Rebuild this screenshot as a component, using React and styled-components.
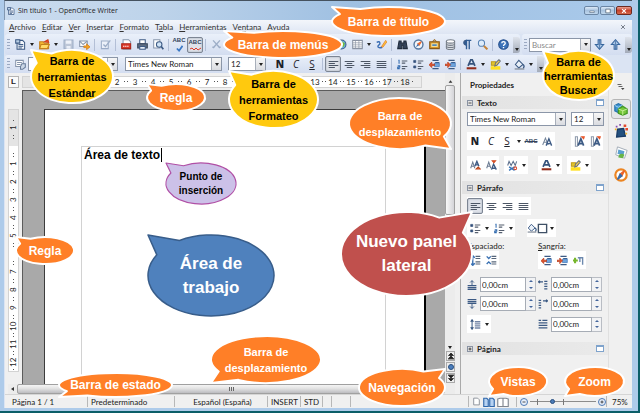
import React from "react";
import styled, { createGlobalStyle, css } from "styled-components";

const GlobalStyle = createGlobalStyle`
  * {
    box-sizing: border-box;
  }

  body {
    margin: 0;
    font-family: Lato, "Open Sans", sans-serif;
    font-size: 8px;
    color: #222;
  }

  button, input, select {
    margin: 0;
    padding: 0;
    border: 0;
    background: none;
    color: inherit;
    font: inherit;
  }
`;

/* ---------- window ---------- */

const Window = styled.div`
  position: relative;
  display: flex;
  flex-direction: column;
  min-height: 100vh;
  overflow: hidden;
  background: #dbe4f3;
  border: solid #0b5e68;
  border-width: 0 2px 2px 0;
`;

const Frame = styled.div`
  flex: 1;
  display: flex;
  flex-direction: column;
  border: solid #aecbea;
  border-width: 0 6px 3px 4px;
`;

const TitleBar = styled.header`
  display: flex;
  align-items: center;
  gap: 3px;
  height: 20px;
  padding: 0 0 0 2px;
  border-top: 1px solid #45525f;
  border-left: 1px solid #8297af;
  background: linear-gradient(90deg, #cbdcef 0, #bdd3ea 25%, #9fc0e2 55%, #a9c9ea 100%);
`;

const Title = styled.h1`
  flex: 1;
  margin: 0;
  font-family: "Open Sans", sans-serif;
  font-size: 7px;
  font-weight: 400;
`;

const WindowButton = styled.button`
  display: grid;
  place-items: center;
  width: ${({ $close }) => ($close ? 16 : 15)}px;
  height: 9px;
  border: 1px solid ${({ $close }) => ($close ? "#6d2a20" : "#6b86a5")};
  border-radius: 2px;
  background: ${({ $close }) =>
    $close
      ? "linear-gradient(#e9a294, #c6422c 50%, #d56a4c)"
      : "linear-gradient(#dbe8f6, #a9c3df 50%, #c1d8ee)"};
`;

const WindowButtons = styled.div`
  display: flex;
  gap: 1px;
`;

const MenuBar = styled.nav`
  display: flex;
  align-items: center;
  height: 14px;
  margin-left: 1px;
  padding: 0 4px 0 4px;
  gap: 6px;
  background: linear-gradient(#f3f6fb, #dde5f3);
`;

const MenuItem = styled.a`
  color: #333;
  text-decoration: none;

  &:last-of-type {
    flex: 1;
  }
`;

const CloseDocument = styled.button`
  display: grid;
  place-items: center;
  width: 10px;
  height: 10px;
`;

/* ---------- toolbars ---------- */

const ToolbarRow = styled.div`
  display: flex;
  height: ${({ $tall }) => ($tall ? 21 : 18)}px;
  margin-left: 1px;
`;

const Toolbar = styled.div`
  display: flex;
  align-items: center;
  flex: none;
  margin-right: 2px;
  padding-left: 2px;
  border-radius: 3px;
  background: linear-gradient(#eaf0fa, #d3ddf0);
`;

const Grip = styled.span`
  width: 3px;
  height: 12px;
  margin-right: 2px;
  background: repeating-linear-gradient(#9ba9c2 0 1px, transparent 1px 3px);
`;

const Separator = styled.span`
  width: 1px;
  height: 12px;
  margin: 0 2px;
  background: #b3bfd6;
`;

const Overflow = styled.button`
  display: flex;
  align-items: flex-end;
  justify-content: center;
  align-self: center;
  width: 7px;
  height: 16px;
  margin-left: 2px;
  padding-bottom: 2px;
  border-radius: 0 3px 3px 0;
  background: linear-gradient(#dfe4ec, #a3abb9);
`;

const Tool = styled.button`
  display: grid;
  place-items: center;
  flex: none;
  width: 16px;
  height: 16px;
  opacity: ${({ $faded }) => ($faded ? 0.4 : 1)};
  ${({ $active }) =>
    $active &&
    css`
      border: 1px solid #7d8694;
      border-radius: 2px;
      background: #dfe3ea;
      box-shadow: inset 0 0 2px #9aa3b1;
    `}
`;

const CaretButton = styled.button`
  display: grid;
  place-items: center;
  flex: none;
  width: 8px;
  height: 14px;
`;

const Arrow = styled.span`
  border: solid transparent;
  border-width: 3px 2px 0;
  border-top-color: #222;
`;

const ComboFrame = styled.label`
  display: flex;
  flex: ${({ $grow }) => ($grow ? "1" : "none")};
  width: ${({ $width }) => ($width ? `${$width}px` : "auto")};
  min-width: 0;
  height: 14px;
  margin-right: ${({ $gap }) => $gap || 0}px;
  border: 1px solid #8b96a8;
  background: #fff;
`;

const ComboSelect = styled.select`
  flex: 1;
  min-width: 0;
  padding-left: 2px;
  appearance: none;
  color: ${({ $muted }) => ($muted ? "#888" : "#222")};
`;

const ComboButton = styled.span`
  display: grid;
  place-items: center;
  flex: none;
  width: 10px;
  border-left: 1px solid #a8afba;
  background: linear-gradient(#f7f7f7, #d9dbe0);
`;

const Letter = styled.span`
  font: ${({ $weight }) => $weight || 700} 10px/12px "Open Sans", sans-serif;
  font-style: ${({ $italic }) => ($italic ? "italic" : "normal")};
  text-decoration: ${({ $underline }) => ($underline ? "underline" : "none")};
  color: #1d222b;
`;

const SmallLetters = styled.span`
  font: 700 6px/6px "Liberation Sans", sans-serif;
  color: #33425c;
  text-decoration: ${({ $strike }) => ($strike ? "line-through" : "none")};
`;

/* ---------- document ---------- */

const Body = styled.main`
  flex: 1;
  display: flex;
  margin-left: 1px;
  background: #f0f0f0;
`;

const Workspace = styled.section`
  flex: 1;
  display: flex;
  flex-direction: column;
  min-width: 0;
  padding-left: 3px;
`;

const WorkspaceRow = styled.div`
  flex: 1;
  display: flex;
`;

const Column = styled.div`
  flex: 1;
  display: flex;
  flex-direction: column;
  min-width: 0;
`;

const RulerRow = styled.div`
  display: flex;
  align-items: center;
  gap: 3px;
  height: 17px;
`;

const TabStop = styled.button`
  width: 11px;
  height: 12px;
  border: 1px solid #b5b5b5;
  background: #fafafa;
  font: 700 8px/9px "Liberation Sans", sans-serif;
`;

const Ruler = styled.div`
  display: flex;
  justify-content: flex-start;
  width: 400px;
  max-width: 100%;
  height: 12px;
  padding-left: 67px;
  overflow: hidden;
  border: 1px solid #d3d3d3;
  background: linear-gradient(90deg, #e4e4e4 59px, #fff 59px 364px, #ececec 364px);
`;

const RulerMark = styled.span`
  display: flex;
  align-items: center;
  justify-content: space-between;
  flex: none;
  width: 18px;
  padding: 0 1px;
  line-height: 10px;

  &::before,
  &::after {
    content: "";
    width: 1px;
    height: 1px;
    background: #555;
  }
`;

const VerticalRuler = styled.div`
  display: flex;
  flex-direction: column;
  width: 11px;
  margin-top: 19px;
  padding-top: 9px;
  align-self: flex-start;
  border: 1px solid #d3d3d3;
  background: linear-gradient(#e4e4e4 36px, #fff 36px);
`;

const VerticalMark = styled.span`
  display: flex;
  align-items: center;
  justify-content: space-between;
  flex: none;
  height: 18px;
  width: 9px;
  padding: 1px 0;
  writing-mode: vertical-rl;
  transform: rotate(180deg);
  line-height: 9px;

  &::before,
  &::after {
    content: "";
    width: 1px;
    height: 1px;
    background: #555;
  }
`;

const Canvas = styled.div`
  flex: 1;
  display: flex;
  margin-left: 3px;
  padding: 18px 19px 0 21px;
  border: solid #5c5c5c;
  border-width: 1px 0 0 1px;
  background: #a9a9a9;
`;

const Page = styled.article`
  flex: 1;
  padding: 36px 38px 0 36px;
  border: solid #3c3c3c;
  border-width: 1px 2px 0 1px;
  border-right-color: #000;
  background: #fff;
`;

const TextArea = styled.div`
  height: 100%;
  padding: 1px 1px 1px 2px;
  border: solid #d2d2d2;
  border-width: 1px 1px 0;
  font: 700 12px/14px "Liberation Sans", Arial, sans-serif;
  color: #000;
`;

const Cursor = styled.span`
  display: inline-block;
  width: 1px;
  height: 14px;
  margin-left: 1px;
  vertical-align: top;
  background: #000;
`;

const VScroll = styled.div`
  display: flex;
  flex-direction: column;
  align-items: center;
  gap: 1px;
  width: 10px;
  padding: 5px 0 1px;
  background: #ececec;
`;

const VTrack = styled.div`
  flex: 1;
  display: flex;
  flex-direction: column;
  width: 10px;
`;

const VThumb = styled.div`
  flex: ${({ $share }) => $share};
  border: 1px solid #a0a0a0;
  border-radius: 2px;
  background: linear-gradient(90deg, #f8f8f8, #d4d4d8);
`;

const VRest = styled.div`
  flex: ${({ $share }) => $share};
`;

const ScrollButton = styled.button`
  display: grid;
  place-items: center;
  width: 9px;
  height: ${({ $tall }) => ($tall ? 10 : 6)}px;
  border: ${({ $tall }) => ($tall ? "1px solid #aaa" : "0")};
`;

const HScroll = styled.div`
  display: flex;
  align-items: stretch;
  height: 10px;
  padding-right: 10px;
  background: #ececec;
`;

const LeftButton = styled.button`
  display: grid;
  place-items: center;
  width: 9px;
  height: 10px;

  &::before {
    content: "";
    border: solid transparent;
    border-width: 2px 3px 2px 0;
    border-right-color: #333;
  }
`;

const HThumb = styled.div`
  display: flex;
  align-items: center;
  justify-content: center;
  flex: 1;
  border: 1px solid #a0a0a0;
  border-radius: 2px;
  background: linear-gradient(#f5f5f5, #e2e2e2 45%, #bcbcc0);
`;

const HGrip = styled.span`
  width: 5px;
  height: 4px;
  background: repeating-linear-gradient(90deg, #666 0 1px, transparent 1px 2px);
`;

/* ---------- sidebar ---------- */

const Sidebar = styled.aside`
  display: flex;
  flex: none;
  width: 177px;
`;

const Panel = styled.div`
  flex: 1;
  min-width: 0;
  margin-left: 5px;
  border-left: 1px solid #aaa;
  border-right: 1px solid #e0e0e0;
`;

const PanelTitle = styled.h2`
  margin: 0;
  padding: 6px 0 5px 9px;
  font-size: 8px;
  line-height: 12px;
  font-weight: 700;
`;

const SectionHeader = styled.h3`
  display: flex;
  align-items: center;
  gap: 4px;
  height: 13px;
  margin: 0 0 0 1px;
  padding: 0 4px 0 5px;
  background: linear-gradient(90deg, #e2e2e2, #eaeaea);
  font-size: 8px;
  font-weight: 700;
`;

const SectionName = styled.span`
  flex: 1;
`;

const Toggle = styled.button`
  display: grid;
  place-items: center;
  width: 6px;
  height: 6px;
  border: 1px solid #8a93a3;
`;

const MoreButton = styled.button`
  width: 8px;
  height: 7px;
  border: 1px solid #7fa3cc;
  border-top-width: 2px;
  background: #fff;
`;

const SectionBody = styled.div`
  display: flex;
  flex-direction: column;
  gap: ${({ $gap }) => $gap}px;
  padding: ${({ $bottom }) => `3px 4px ${$bottom}px 6px`};
`;

const PanelRow = styled.div`
  display: flex;
  align-items: center;
  gap: 5px;
`;

const Halves = styled.div`
  display: grid;
  grid-template-columns: ${({ $left }) => $left || 71}px minmax(0, 1fr);
  align-items: center;
`;

const Group = styled.div`
  display: flex;
  align-items: center;
  justify-self: start;
  height: 18px;
  background: #fff;
`;

const FieldName = styled.span`
  line-height: 10px;
`;

const Spin = styled.label`
  display: flex;
  align-items: center;
  min-width: 0;
  height: 15px;
  padding-right: 2px;
`;

const SpinInput = styled.input`
  flex: 1;
  width: 0;
  min-width: 0;
  height: 15px;
  margin-left: 3px;
  padding-left: 1px;
  border: 1px solid #a6acb5;
  background: #fff;
`;

const SpinSteps = styled.span`
  display: grid;
  flex: none;
  width: 10px;
  height: 15px;
  border: solid #b9bdc4;
  border-width: 1px 1px 1px 0;
  background: #f2f3f5;
`;

const Step = styled.button`
  display: grid;
  place-items: center;

  &::before {
    content: "";
    border: solid transparent;
    border-width: ${({ $up }) => ($up ? "0 2px 2px" : "2px 2px 0")};
    border-color: ${({ $up }) =>
      $up ? "transparent transparent #42659c" : "#42659c transparent transparent"};
  }
`;

const TabStrip = styled.div`
  display: flex;
  flex-direction: column;
  align-items: center;
  gap: 2px;
  width: 23px;
  padding-top: 4px;
`;

const SideTab = styled.button`
  display: grid;
  place-items: center;
  width: 20px;
  height: 20px;
  border: 1px solid ${({ $active }) => ($active ? "#b5b5b5" : "transparent")};
  border-radius: 3px;
  background: ${({ $active }) => ($active ? "#e4e6e8" : "none")};
`;

/* ---------- status bar ---------- */

const StatusBar = styled.footer`
  display: flex;
  align-items: center;
  height: 14px;
  margin-left: 1px;
  border-top: 1px solid #d5d5d5;
  background: #f0f0f0;
`;

const StatusCell = styled.span`
  flex: none;
  display: flex;
  align-items: center;
  justify-content: ${({ $center }) => ($center ? "center" : "flex-start")};
  gap: 2px;
  width: ${({ $width }) => $width}px;
  height: 11px;
  padding-left: ${({ $pad }) => $pad || 3}px;
  border-right: ${({ $last }) => ($last ? "0" : "1px solid #b8b8b8")};
`;

const StatusSpace = styled.span`
  flex: 1;
  height: 11px;
  border-right: 1px solid #b8b8b8;
`;

const RoundButton = styled.button`
  display: grid;
  place-items: center;
  flex: none;
  width: 8px;
  height: 8px;
  border: 1px solid #4e79b4;
  border-radius: 50%;
  background: #e6eefa;
`;

const ZoomRange = styled.input`
  appearance: none;
  flex: 1;
  min-width: 0;
  height: 9px;
  background:
    linear-gradient(#777, #777) 7px 50% / 1px 6px no-repeat,
    linear-gradient(#777, #777) 50% 50% / 1px 6px no-repeat,
    linear-gradient(#8c8c8c, #8c8c8c) 0 50% / 100% 1px no-repeat;

  &::-webkit-slider-thumb {
    appearance: none;
    width: 5px;
    height: 5px;
    border: 1px solid #294f80;
    border-radius: 50%;
    background: #4a7cb8;
  }
`;

/* ---------- callouts ---------- */

const CalloutBox = styled.div`
  position: absolute;
  ${({ $x }) => ($x < 0 ? `right: ${-$x}px` : `left: ${$x}px`)};
  ${({ $y }) => ($y < 0 ? `bottom: ${-$y}px` : `top: ${$y}px`)};
  width: ${({ $w }) => $w}px;
  height: ${({ $h }) => $h}px;
  display: flex;
  align-items: center;
  justify-content: center;
  text-align: center;
  white-space: pre;
  font: 700 ${({ $size }) => $size}px / ${({ $line }) => $line}px "Liberation Sans", Arial, sans-serif;
  color: ${({ $color }) => $color};
`;

const BubbleShape = styled.svg`
  position: absolute;
  inset: 0;
  width: 100%;
  height: 100%;
  overflow: visible;
`;

const CalloutText = styled.span`
  position: relative;
`;

const tones = {
  orange: { fill: "#ff7f27", stroke: "#fff", width: 2, color: "#fff" },
  yellow: { fill: "#ffc90e", stroke: "#fff", width: 2, color: "#000" },
  red: { fill: "#c0504d", stroke: "#fff", width: 2, color: "#fff" },
  blue: { fill: "#4f81bd", stroke: "#385d8a", width: 1.5, color: "#fff" },
  violet: { fill: "#ccc1e8", stroke: "#b04fa5", width: 1.2, color: "#000" },
};

// ellipse that fills the box, with a tail that ends in one of its corners
function bubblePath(w, h, corner) {
  const sx = corner.includes("r") ? 1 : -1;
  const sy = corner.includes("b") ? 1 : -1;
  const at = (nx, ny) => [(w / 2) * (1 + sx * nx), (h / 2) * (1 + sy * ny)];
  const side = at(0.86, 0.51);
  const flat = at(0.5, 0.866);
  const tip = at(1, 1);
  const sweep = sx * sy > 0 ? 0 : 1;
  return `M${tip} L${side} A${w / 2} ${h / 2} 0 1 ${sweep} ${flat} Z`;
}

function Callout({ x, y, w, h, corner = "tl", tone = "orange", size = 12, line = 16, children }) {
  const t = tones[tone];
  return (
    <CalloutBox $x={x} $y={y} $w={w} $h={h} $size={size} $line={line} $color={t.color}>
      <BubbleShape aria-hidden="true">
        <path d={bubblePath(w, h, corner)} fill={t.fill} stroke={t.stroke} strokeWidth={t.width} strokeLinejoin="round" />
      </BubbleShape>
      <CalloutText>{children}</CalloutText>
    </CalloutBox>
  );
}

const callouts = [
  { x: 31, y: 50, w: 82, h: 53, tone: "yellow", size: 11, text: "Barra de\nherramientas\nEstándar" },
  { x: 332, y: 7, w: 113, h: 29, text: "Barra de título" },
  { x: 224, y: 31, w: 118, h: 27, text: "Barra de menús" },
  { x: 147, y: 84, w: 58, h: 27, text: "Regla" },
  { x: 229, y: 71, w: 89, h: 57, tone: "yellow", size: 11, text: "Barra de\nherramientas\nFormateo" },
  { x: -24, y: 51, w: 71, h: 49, tone: "yellow", size: 11, line: 14, text: "Barra de\nherramientas\nBuscar" },
  { x: -187, y: 98, w: 102, h: 51, corner: "br", size: 11, text: "Barra de\ndesplazamiento" },
  { x: 166, y: 163, w: 70, h: 41, tone: "violet", size: 10, line: 14, text: "Punto de\ninserción" },
  { x: 148, y: 235, w: 126, h: 81, tone: "blue", size: 17, line: 24, text: "Área de\ntrabajo" },
  { x: -166, y: 212, w: 131, h: 84, corner: "tr", tone: "red", size: 17, line: 24, text: "Nuevo panel\nlateral" },
  { x: 16, y: 237, w: 58, h: 27, text: "Regla" },
  { x: 59, y: -14, w: 113, h: 24, corner: "bl", text: "Barra de estado" },
  { x: 211, y: -28, w: 110, h: 47, corner: "bl", size: 11, text: "Barra de\ndesplazamiento" },
  { x: -193, y: -5, w: 86, h: 37, corner: "tr", text: "Navegación" },
  { x: -91, y: -15, w: 58, h: 29, corner: "bl", text: "Vistas" },
  { x: -14, y: -15, w: 59, h: 29, corner: "bl", text: "Zoom" },
];

/* ---------- icons ---------- */

const Svg = styled.svg`
  display: block;
  flex: none;
  width: ${({ $size }) => $size || 11}px;
  height: ${({ $size }) => $size || 11}px;
  fill: none;
  stroke: #3c5a84;
  stroke-width: 1.5;
`;

const shapes = {
  doc: (
    <>
      <path d="M3 2h8l3 3v10H3z" fill="#f5f8fc" />
      <path d="M1 1h6v5H1z" fill="#b9cfe5" />
      <path d="M5 8h7M5 10.500h7M5 13h5" />
    </>
  ),
  folder: (
    <>
      <path d="M1 4h5l2 2h6v8H1z" fill="#f2b632" stroke="#c5811c" />
      <path d="M3 8h12l-3 6H1z" fill="#ffdb67" stroke="#c5811c" />
      <path d="M8 4l5-3 1 4z" fill="#e4572e" stroke="#d2411d" />
    </>
  ),
  save: (
    <>
      <path d="M1.500 1.500h13v13h-13z" fill="#8d99ad" />
      <path d="M4 2h8v5H4zM5 10h6v4H5z" fill="#fff" stroke="none" />
    </>
  ),
  mail: (
    <>
      <path d="M1 3h11v8H1z" fill="#fff" stroke="#8796ac" />
      <path d="M1 3l5 5 6-5" stroke="#8796ac" />
      <path d="M7 10h4V7l5 4.500-5 4v-3H7z" fill="#f6a420" stroke="#cf7412" strokeWidth="1" />
    </>
  ),
  edit: (
    <>
      <path d="M2 3h10v11H2z" fill="#fff" />
      <path d="M5 8l3 3 7-9" strokeWidth="2" />
    </>
  ),
  check: <path d="M2 8l5 5 8-11" stroke="#3b78c4" strokeWidth="4" />,
  pdf: (
    <>
      <path d="M3 1h8l3 3v11H3z" fill="#fff" stroke="#8796ac" />
      <path d="M1 7h13v7H1z" fill="#db3a2a" stroke="#ae2418" />
      <path d="M3 10.500h9" stroke="#fff" strokeDasharray="2 1" />
    </>
  ),
  print: (
    <>
      <path d="M4 1h8v6H4z" fill="#fff" />
      <path d="M1 7h14v6H1z" fill="#5d6d83" stroke="#38465a" />
      <path d="M4 11h8v4H4z" fill="#e6edf7" />
    </>
  ),
  preview: (
    <>
      <path d="M1 1h9v12H1z" fill="#fff" stroke="#8796ac" />
      <circle cx="9" cy="8" r="4" fill="#cfe3f6" />
      <path d="M12 11l3 4" strokeWidth="2.500" />
    </>
  ),
  cut: <path d="M3 2l10 11M13 2L3 13M2 12h3M11 12h3" strokeWidth="2" />,
  copy: <path d="M2 2h8v9H2zM6 5h8v9H6z" fill="#fff" />,
  paste: <path d="M2 3h11v12H2zM5 1h5v3H5z" fill="#e0c48a" />,
  brush: <path d="M9 1l4 4-6 5-3-3zM5 9l-3 6 6-3" fill="#f3bb4b" />,
  undo: <path d="M2 7h8a3 3 0 0 1 0 6H6M5 3L2 7l3 4" />,
  redo: <path d="M14 7H6a3 3 0 0 0 0 6h4M11 3l3 4-3 4" />,
  globe: (
    <>
      <circle cx="8" cy="8" r="6.500" fill="#69aede" />
      <path d="M8 3l5 3-2 6-4-3z" fill="#70bb43" stroke="none" />
    </>
  ),
  table: (
    <>
      <path d="M1 2h14v12H1z" fill="#fff" stroke="#8a93a3" />
      <path d="M1 5.500h14M1 8.500h14M1 11.500h14M5 2v12M10 2v12" stroke="#8a93a3" strokeWidth="1" />
    </>
  ),
  draw: (
    <>
      <path d="M1 5c5-3 6 2 3 4s0 5 5 3" stroke="#3a6eb5" strokeWidth="2" />
      <path d="M8 11l6-9 2 2-6 8z" fill="#ffc735" stroke="#df7023" strokeWidth="1" />
    </>
  ),
  find: <path d="M3 3h3v3h4V3h3l2 11H9V9H7v5H1z" fill="#34435a" stroke="#202b3b" />,
  compass: (
    <>
      <circle cx="8" cy="8" r="6.500" fill="#f1f6fc" stroke="#54779f" strokeWidth="2" />
      <path d="M12 4l-3 5-2-2z" fill="#ef6a2e" stroke="#ef6a2e" />
      <path d="M4 12l3-5 2 2z" fill="#3c6fae" stroke="none" />
    </>
  ),
  gallery: (
    <>
      <path d="M5 4l3-3 3 3" stroke="#9a6b22" />
      <path d="M1 4h14v10H1z" fill="#d59726" stroke="#87591a" />
      <path d="M4 7h8v4H4z" fill="#518ab9" stroke="#f7de95" />
    </>
  ),
  database: (
    <>
      <path d="M2 3v10c0 3 12 3 12 0V3" fill="#d7dbe0" stroke="#777f89" />
      <ellipse cx="8" cy="3.500" rx="6" ry="2.500" fill="#fff" stroke="#777f89" />
      <path d="M2 7c0 3 12 3 12 0M2 10c0 3 12 3 12 0" stroke="#777f89" />
    </>
  ),
  pilcrow: (
    <>
      <path d="M8 2a4 3.500 0 0 0 0 7z" fill="#315d93" />
      <path d="M8 2v13M12 2v13M7 2h8" strokeWidth="2" stroke="#315d93" />
    </>
  ),
  zoom: (
    <>
      <circle cx="6.500" cy="6" r="4.500" fill="#deecfa" stroke="#5681b3" />
      <path d="M10 10l5 5" stroke="#c48439" strokeWidth="3" />
    </>
  ),
  help: (
    <>
      <circle cx="8" cy="8" r="7" fill="#3c73b9" stroke="#264f8b" />
      <path d="M5.500 6c0-3 5-3 5 0 0 2-2.500 2-2.500 4M8 11.500v2" stroke="#fff" strokeWidth="2" />
    </>
  ),
  styles: (
    <>
      <path d="M1 2h11v9H1z" fill="#fff" stroke="#8796ac" />
      <path d="M3 5h7M3 8h5" stroke="#8796ac" />
      <path d="M10 7h5v5l-4 3H8v-4z" fill="#cbd7e6" stroke="#667b98" />
    </>
  ),
  down: (
    <>
      <path d="M6 1h4v7h4l-6 7-6-7h4z" fill="#a9c6e6" stroke="#37669d" />
      <path d="M8 1v12" stroke="#37669d" strokeWidth="1" />
    </>
  ),
  up: (
    <>
      <path d="M6 15h4V8h4L8 1 2 8h4z" fill="#a9c6e6" stroke="#37669d" />
      <path d="M8 3v12" stroke="#37669d" strokeWidth="1" />
    </>
  ),
  scrollUp: <path d="M2 12l6-8 6 8z" fill="#333" stroke="none" />,
  left: <path d="M1 3.500h14M1 6.500h9M1 9.500h14M1 12.500h9" stroke="#4c5665" />,
  center: <path d="M1 3.500h14M4 6.500h8M1 9.500h14M4 12.500h8" stroke="#4c5665" />,
  right: <path d="M1 3.500h14M6 6.500h9M1 9.500h14M6 12.500h9" stroke="#4c5665" />,
  justify: <path d="M1 3.500h14M1 6.500h14M1 9.500h14M1 12.500h14" stroke="#4c5665" />,
  numbers: (
    <>
      <path d="M7 3h8M7 6h5M7 11h8M7 14h5" stroke="#555f6f" />
      <path d="M2 2h1v5M1 10h3v2H1v2h3" stroke="#2f69ae" />
    </>
  ),
  bullets: (
    <>
      <path d="M7 3h8M7 6h5M7 11h8M7 14h5" stroke="#555f6f" />
      <path d="M1 2h3v3H1zM1 10h3v3H1z" fill="#35517c" stroke="#35517c" strokeWidth="1" />
    </>
  ),
  outdent: (
    <>
      <path d="M5 2h9M9 5h6M5 14h9" />
      <path d="M8 6h7v5H8z" fill="#6fa5dc" stroke="#3c73b9" strokeWidth="1" />
      <path d="M0 8.500l4-4v3h4v2H4v3z" fill="#e0542b" stroke="#b53618" strokeWidth="1" />
    </>
  ),
  indent: (
    <>
      <path d="M5 2h9M9 5h6M5 14h9" />
      <path d="M8 6h7v5H8z" fill="#6fa5dc" stroke="#3c73b9" strokeWidth="1" />
      <path d="M8 8.500l-4-4v3H0v2h4v3z" fill="#e0542b" stroke="#b53618" strokeWidth="1" />
    </>
  ),
  hanging: (
    <>
      <path d="M7 4h7v10M10 5v5" stroke="#6d89ae" strokeWidth="2" />
      <path d="M3 4v8M0 8h7" stroke="#76b62c" strokeWidth="3" />
    </>
  ),
  fontColor: (
    <>
      <path d="M3 10l4-9h2l4 9M5 7h6" stroke="#36547d" strokeWidth="2.500" />
      <path d="M1 13.500h14" stroke="#902c1b" strokeWidth="3" />
    </>
  ),
  highlight: (
    <>
      <path d="M1 13h14" stroke="#ffdf20" strokeWidth="5" />
      <path d="M2 4h6v5H2z" fill="#e1c62c" stroke="#c09b17" />
      <path d="M7 10l1-4 5-5 2 2-5 6z" fill="#f5d04f" stroke="#69717e" />
    </>
  ),
  fill: (
    <>
      <path d="M2 8l5-6 6 6-6 5z" fill="#eaf1f9" />
      <path d="M13 8c3 2 1 5 0 5" strokeWidth="2" />
      <path d="M1 14.500h14" stroke="#88919e" strokeWidth="2" />
    </>
  ),
  bigA: (
    <>
      <path d="M1 13L5 3l4 10M3 9h4" stroke="#75859a" />
      <path d="M6 14l4-10 4 10M8 11h4" strokeWidth="2" />
    </>
  ),
  grow: (
    <>
      <path d="M1 12L4 3l3 9M2 9h4" stroke="#6b7b92" />
      <path d="M7 9l3-7 3 7M8 7h4" strokeWidth="2" />
      <path d="M9 13l3-3 3 3z" fill="#e8882c" stroke="#b9441f" />
    </>
  ),
  shrink: (
    <>
      <path d="M1 12L4 3l3 9M2 9h4" stroke="#6b7b92" />
      <path d="M8 14l3-8 4 8M9 12h4" strokeWidth="2" />
      <path d="M9 1h5l-2.500 3z" fill="#e06a2c" stroke="#d24b24" />
    </>
  ),
  spaceA: (
    <>
      <path d="M2 1v14H5V1z" stroke="#8d99aa" />
      <path d="M6 14l4-10 4 10M8 11h4" strokeWidth="2.500" />
      <path d="M11 1l3 3 1-3z" fill="#e8572b" stroke="#e8572b" />
    </>
  ),
  kerning: (
    <>
      <path d="M1 8l2-6 3 6 3-6 3 6 2-6" stroke="#5c6f8c" />
      <path d="M3 10l8 5M11 10l-8 5" stroke="#3774b8" strokeWidth="2" />
      <circle cx="12" cy="12" r="2" stroke="#d74b31" />
    </>
  ),
  border: <path d="M2 2h12v12H2z" fill="#fff" stroke="#3f5066" strokeWidth="2" />,
  spacing: (
    <>
      <path d="M8 2h7M8 5h7M8 10h7M8 13h7" stroke="#566579" />
      <path d="M4 2v11M1 4l3-3 3 3M1 12l3 3 3-3" stroke="#3970b2" strokeWidth="2" />
    </>
  ),
  spacingTight: (
    <>
      <path d="M8 2h7M8 5h7M8 10h7M8 13h7" stroke="#566579" />
      <path d="M1 2l3 3 3-3M1 13l3-3 3 3" stroke="#3970b2" strokeWidth="2" />
    </>
  ),
  above: (
    <>
      <path d="M8 1v7M5 4l3-3 3 3" />
      <path d="M1 9h14M1 12h14M1 15h14" strokeWidth="2" />
    </>
  ),
  below: (
    <>
      <path d="M1 1h14M1 4h14M1 7h14" strokeWidth="2" />
      <path d="M8 8v7M5 12l3 3 3-3" />
    </>
  ),
  before: <path d="M1 3h7M3 1L1 3l2 2M10 2h5M10 6h5M10 10h5M10 14h5" strokeWidth="2" />,
  after: <path d="M8 3h7M13 1l2 2-2 2M1 2h4M1 6h4M1 10h4M1 14h4" strokeWidth="2" />,
  firstLine: <path d="M1 2h4M7 2h8M1 6h14M1 10h14M1 14h14" strokeWidth="2" />,
  lineSpacing: (
    <>
      <path d="M3 2v12M1 4l2-3 2 3M1 12l2 3 2-3" />
      <path d="M7 4h8M7 7h8M7 10h8M7 13h8" stroke="#7184a5" strokeWidth="2" />
    </>
  ),
  cubes: (
    <>
      <path d="M1 4l4-2 4 2v6l-4 2-4-2z" fill="#3f94d2" stroke="#2773ae" />
      <path d="M1 4l4 2 4-2" stroke="#a9dbf7" strokeWidth="1" />
      <path d="M5 8l5-3 5 3v5l-5 2-5-2z" fill="#78c83c" stroke="#459a24" />
      <path d="M5 8l5 2 5-2M10 10v5" stroke="#d0f3a6" strokeWidth="1" />
    </>
  ),
  stars: (
    <>
      <path d="M4 6l7-1 2 9-10 1z" fill="#24517f" stroke="#183b65" />
      <path d="M2 3h2M6 1h2" stroke="#8a4eb0" strokeWidth="2" />
      <path d="M11 2h3M13 6h3" stroke="#e34a2d" strokeWidth="3" />
      <path d="M1 6h2M13 11h2" stroke="#f3b32b" strokeWidth="2" />
    </>
  ),
  photos: (
    <>
      <path d="M4 1l11 4-3 9-10-4z" fill="#fff" stroke="#9aa6b1" strokeWidth="1" />
      <path d="M5 4l7 2-1 4-7-1z" fill="#5aa0d0" stroke="none" />
      <path d="M5 13c0-5 5-5 7-3l-2 4z" fill="#67b448" stroke="none" />
    </>
  ),
  navigator: (
    <>
      <circle cx="8" cy="8" r="6.500" fill="#fff" stroke="#ec8522" strokeWidth="2.500" />
      <path d="M12 3L9 9 7 7z" fill="#ec6228" stroke="#ec6228" />
      <path d="M4 13l3-6 2 2z" fill="#3a6ca8" stroke="#3a6ca8" />
    </>
  ),
  configure: (
    <>
      <path d="M1 3h8M3 7h8" stroke="#666" strokeWidth="2" />
      <path d="M8 10h7l-3.500 4z" fill="#444" stroke="none" />
    </>
  ),
  pageUp: <path d="M3 7l5-5 5 5zM3 13l5-5 5 5zM2 14h12" fill="#222" stroke="#222" />,
  pageDown: <path d="M3 9l5 5 5-5zM3 3l5 5 5-5zM2 2h12" fill="#222" stroke="#222" />,
  navDot: <circle cx="8" cy="8" r="5" fill="#4c7ebc" stroke="#294f80" strokeWidth="2" />,
  close: <path d="M3 3l10 10M13 3L3 13" stroke="#4d5663" strokeWidth="2" />,
  closeWhite: <path d="M3 3l10 10M13 3L3 13" stroke="#fff" strokeWidth="3" />,
  minimize: <path d="M2 8h12v4H2z" fill="#fff" stroke="#4d6077" />,
  maximize: <path d="M2 3h12v10H2z" fill="#fff" stroke="#4d6077" strokeWidth="2" />,
  minus: <path d="M2 8h12" stroke="#222" strokeWidth="3" />,
  plus: <path d="M2 8h12M8 2v12" stroke="#222" strokeWidth="3" />,
  onePage: <path d="M3 2h7l3 3v9H3z" fill="#fff" stroke="#80868f" />,
  twoPages: <path d="M1 3h4l2 2v9H1zM9 3h4l2 2v9H9z" fill="#b6d2f2" stroke="#2e66aa" />,
  book: <path d="M1 4l3-1h4v11H1zM15 4l-3-1H8v11h7z" fill="#fff" stroke="#80868f" />,
};

function Icon({ name, size }) {
  return (
    <Svg viewBox="0 0 16 16" $size={size} aria-hidden="true">
      {shapes[name]}
    </Svg>
  );
}

function IconTool({ name, label, ...rest }) {
  return (
    <Tool aria-label={label || name} {...rest}>
      <Icon name={name} />
    </Tool>
  );
}

function Caret() {
  return (
    <CaretButton aria-label="Más opciones">
      <Arrow />
    </CaretButton>
  );
}

function Combo({ label, value, muted, ...rest }) {
  return (
    <ComboFrame {...rest}>
      <ComboSelect aria-label={label} $muted={muted} defaultValue={value}>
        <option>{value}</option>
      </ComboSelect>
      <ComboButton>
        <Arrow />
      </ComboButton>
    </ComboFrame>
  );
}

function SpinField({ icon, label }) {
  return (
    <Spin>
      <Icon name={icon} size={10} />
      <SpinInput aria-label={label} defaultValue="0,00cm" />
      <SpinSteps>
        <Step $up aria-label="Aumentar" />
        <Step aria-label="Reducir" />
      </SpinSteps>
    </Spin>
  );
}

function Section({ name, closed }) {
  return (
    <SectionHeader>
      <Toggle aria-label={name}>
        <Icon name={closed ? "plus" : "minus"} size={4} />
      </Toggle>
      <SectionName>{name}</SectionName>
      <MoreButton aria-label="Más" />
    </SectionHeader>
  );
}

const menus = [
  ["", "A", "rchivo"],
  ["", "E", "ditar"],
  ["", "V", "er"],
  ["", "I", "nsertar"],
  ["", "F", "ormato"],
  ["T", "a", "bla"],
  ["", "H", "erramientas"],
  ["Ve", "n", "tana"],
  ["Ay", "u", "da"],
];

const rulerMarks = ["", 2, 3, 4, 5, 6, 7, 8, "", "", "", "", 13, 14, 15, 16, 17, 18];
const verticalMarks = [1, "", 1, 2, 3, 4, 5, "", 7, 8, 9, 10, 11, 12];

function StandardToolbar() {
  return (
    <ToolbarRow $tall>
      <Toolbar>
        <Grip />
        <IconTool name="doc" />
        <Caret />
        <IconTool name="folder" />
        <Caret />
        <IconTool name="save" $faded />
        <IconTool name="mail" />
        <Separator />
        <IconTool name="edit" $faded />
        <Separator />
        <IconTool name="pdf" />
        <IconTool name="print" />
        <IconTool name="preview" />
        <Separator />
        <Tool aria-label="Ortografía">
          <SmallLetters>ABC</SmallLetters>
          <Icon name="check" size={7} />
        </Tool>
        <Tool aria-label="Revisión automática" $active>
          <SmallLetters>ABC</SmallLetters>
          <svg width="11" height="4" viewBox="0 0 11 4" fill="none" stroke="#dc3c2c">
            <path d="M0 2l2-1 2 2 2-2 2 2 3-2" />
          </svg>
        </Tool>
        <Separator />
        <IconTool name="cut" $faded />
        <IconTool name="copy" $faded />
        <IconTool name="paste" />
        <Caret />
        <IconTool name="brush" />
        <Separator />
        <IconTool name="undo" />
        <Caret />
        <IconTool name="redo" />
        <Caret />
        <IconTool name="globe" />
        <IconTool name="table" />
        <Caret />
        <IconTool name="draw" />
        <Separator />
        <IconTool name="find" />
        <IconTool name="compass" />
        <IconTool name="gallery" />
        <IconTool name="database" />
        <IconTool name="pilcrow" />
        <IconTool name="zoom" />
        <Separator />
        <IconTool name="help" />
        <Overflow aria-label="Más botones">
          <Arrow />
        </Overflow>
      </Toolbar>
      <Toolbar>
        <Grip />
        <Combo label="Buscar" value="Buscar" muted $width={62} />
        <IconTool name="down" label="Buscar siguiente" />
        <IconTool name="up" label="Buscar anterior" />
        <Overflow aria-label="Más botones">
          <Arrow />
        </Overflow>
      </Toolbar>
    </ToolbarRow>
  );
}

function FormatToolbar() {
  return (
    <ToolbarRow>
      <Toolbar>
        <Grip />
        <IconTool name="styles" />
        <Combo label="Estilo" value="" $width={90} $gap={7} />
        <Combo label="Fuente" value="Times New Roman" $width={97} $gap={6} />
        <Combo label="Tamaño" value="12" $width={38} $gap={6} />
        <Tool aria-label="Negrita">
          <Letter $weight={800}>N</Letter>
        </Tool>
        <Tool aria-label="Cursiva">
          <Letter $italic $weight={400}>C</Letter>
        </Tool>
        <Tool aria-label="Subrayado">
          <Letter $underline $weight={400}>S</Letter>
        </Tool>
        <Separator />
        <IconTool name="left" $active />
        <IconTool name="center" />
        <IconTool name="right" />
        <IconTool name="justify" />
        <Separator />
        <IconTool name="numbers" />
        <IconTool name="bullets" />
        <IconTool name="outdent" />
        <IconTool name="indent" />
        <Separator />
        <IconTool name="fontColor" />
        <Caret />
        <IconTool name="highlight" />
        <Caret />
        <IconTool name="fill" />
        <Caret />
        <Overflow aria-label="Más botones">
          <Arrow />
        </Overflow>
      </Toolbar>
    </ToolbarRow>
  );
}

function DocumentArea() {
  return (
    <Workspace>
      <WorkspaceRow>
        <Column>
          <RulerRow>
            <TabStop aria-label="Tabulación">L</TabStop>
            <Ruler>
              {rulerMarks.map((n, i) => (
                <RulerMark key={i}>{n}</RulerMark>
              ))}
            </Ruler>
          </RulerRow>
          <WorkspaceRow>
            <VerticalRuler>
              {verticalMarks.map((n, i) => (
                <VerticalMark key={i}>{n}</VerticalMark>
              ))}
            </VerticalRuler>
            <Canvas>
              <Page>
                <TextArea>
                  Área de texto
                  <Cursor />
                </TextArea>
              </Page>
            </Canvas>
          </WorkspaceRow>
        </Column>
        <VScroll>
          <ScrollButton aria-label="Arriba">
            <Icon name="scrollUp" size={5} />
          </ScrollButton>
          <VTrack>
            <VThumb $share={1} />
            <VRest $share={1} />
          </VTrack>
          <ScrollButton aria-label="Abajo">
            <Arrow />
          </ScrollButton>
          <ScrollButton $tall aria-label="Página anterior">
            <Icon name="pageUp" size={8} />
          </ScrollButton>
          <ScrollButton $tall aria-label="Navegación">
            <Icon name="navDot" size={8} />
          </ScrollButton>
          <ScrollButton $tall aria-label="Página siguiente">
            <Icon name="pageDown" size={8} />
          </ScrollButton>
        </VScroll>
      </WorkspaceRow>
      <HScroll>
        <LeftButton aria-label="Izquierda" />
        <HThumb>
          <HGrip />
        </HThumb>
      </HScroll>
    </Workspace>
  );
}

function PropertiesSidebar() {
  return (
    <Sidebar>
      <Panel>
        <PanelTitle>Propiedades</PanelTitle>
        <Section name="Texto" />
        <SectionBody $gap={6} $bottom={7}>
          <PanelRow>
            <Combo label="Fuente" value="Times New Roman" $grow />
            <Combo label="Tamaño" value="12" $width={33} />
          </PanelRow>
          <Halves $left={104}>
            <Group>
              <Tool aria-label="Negrita">
                <Letter $weight={800}>N</Letter>
              </Tool>
              <Tool aria-label="Cursiva">
                <Letter $italic $weight={400}>C</Letter>
              </Tool>
              <Tool aria-label="Subrayado">
                <Letter $underline $weight={400}>S</Letter>
              </Tool>
              <Caret />
              <Tool aria-label="Tachado">
                <SmallLetters $strike>ABC</SmallLetters>
              </Tool>
              <IconTool name="bigA" label="Sombra" />
            </Group>
            <Group>
              <IconTool name="spaceA" label="Superíndice" />
              <IconTool name="spaceA" label="Subíndice" />
            </Group>
          </Halves>
          <PanelRow>
            <Group>
              <IconTool name="grow" />
              <IconTool name="shrink" />
            </Group>
            <Group>
              <IconTool name="kerning" />
              <Caret />
            </Group>
            <span />
            <Group>
              <IconTool name="fontColor" />
              <Caret />
            </Group>
            <Group>
              <IconTool name="highlight" />
              <Caret />
            </Group>
          </PanelRow>
        </SectionBody>
        <Section name="Párrafo" />
        <SectionBody $gap={4} $bottom={9}>
          <PanelRow>
            <Group>
              <IconTool name="left" $active />
              <IconTool name="center" />
              <IconTool name="right" />
              <IconTool name="justify" />
            </Group>
          </PanelRow>
          <Halves $left={60}>
            <Group>
              <IconTool name="bullets" />
              <Caret />
              <IconTool name="numbers" />
              <Caret />
            </Group>
            <Group>
              <Icon name="fill" size={10} />
              <Icon name="border" />
              <Caret />
            </Group>
          </Halves>
          <Halves>
            <FieldName>Espaciado:</FieldName>
            <FieldName>
              <u>S</u>angría:
            </FieldName>
            <Group>
              <IconTool name="spacing" />
              <IconTool name="spacingTight" />
            </Group>
            <Group>
              <IconTool name="outdent" />
              <IconTool name="indent" />
              <IconTool name="hanging" />
            </Group>
          </Halves>
          <span />
          <Halves>
            <SpinField icon="above" label="Espacio encima" />
            <SpinField icon="before" label="Sangría izquierda" />
          </Halves>
          <Halves>
            <SpinField icon="below" label="Espacio debajo" />
            <SpinField icon="after" label="Sangría derecha" />
          </Halves>
          <Halves>
            <Group>
              <IconTool name="lineSpacing" />
              <Caret />
            </Group>
            <SpinField icon="firstLine" label="Primera línea" />
          </Halves>
        </SectionBody>
        <Section name="Página" closed />
      </Panel>
      <TabStrip>
        <SideTab aria-label="Configuración">
          <Icon name="configure" size={8} />
        </SideTab>
        <SideTab $active aria-label="Propiedades">
          <Icon name="cubes" size={14} />
        </SideTab>
        <SideTab aria-label="Estilos">
          <Icon name="stars" size={14} />
        </SideTab>
        <SideTab aria-label="Galería">
          <Icon name="photos" size={14} />
        </SideTab>
        <SideTab aria-label="Navegador">
          <Icon name="navigator" size={14} />
        </SideTab>
      </TabStrip>
    </Sidebar>
  );
}

function Status() {
  return (
    <StatusBar>
      <StatusCell $width={83} $pad={7}>Página 1 / 1</StatusCell>
      <StatusCell $width={87}>Predeterminado</StatusCell>
      <StatusCell $width={93} $center>Español (España)</StatusCell>
      <StatusCell $width={33}>INSERT</StatusCell>
      <StatusCell $width={22}>STD</StatusCell>
      <StatusCell $width={9} />
      <StatusCell $width={19} />
      <StatusSpace />
      <StatusCell $width={48}>
        <Icon name="onePage" size={9} />
        <Icon name="twoPages" size={12} />
        <Icon name="book" size={12} />
      </StatusCell>
      <StatusCell $width={90}>
        <RoundButton aria-label="Alejar">
          <Icon name="minus" size={4} />
        </RoundButton>
        <ZoomRange type="range" min="20" max="200" defaultValue="80" aria-label="Zoom" />
        <RoundButton aria-label="Acercar">
          <Icon name="plus" size={4} />
        </RoundButton>
      </StatusCell>
      <StatusCell $width={25} $pad={5} $last>75%</StatusCell>
    </StatusBar>
  );
}

export default function App() {
  return (
    <Window>
      <GlobalStyle />
      <Frame>
        <TitleBar>
          <Icon name="doc" size={8} />
          <Title>Sin titulo 1 - OpenOffice Writer</Title>
          <WindowButtons>
            <WindowButton aria-label="Minimizar">
              <Icon name="minimize" size={6} />
            </WindowButton>
            <WindowButton aria-label="Maximizar">
              <Icon name="maximize" size={6} />
            </WindowButton>
            <WindowButton $close aria-label="Cerrar">
              <Icon name="closeWhite" size={6} />
            </WindowButton>
          </WindowButtons>
        </TitleBar>
        <MenuBar>
          {menus.map(([before, key, after]) => (
            <MenuItem key={before + key + after} href="#">
              {before}
              <u>{key}</u>
              {after}
            </MenuItem>
          ))}
          <CloseDocument aria-label="Cerrar documento">
            <Icon name="close" size={6} />
          </CloseDocument>
        </MenuBar>
        <StandardToolbar />
        <FormatToolbar />
        <Body>
          <DocumentArea />
          <PropertiesSidebar />
        </Body>
        <Status />
      </Frame>
      {callouts.map(({ text, ...place }) => (
        <Callout key={`${text}${place.x}`} {...place}>
          {text}
        </Callout>
      ))}
    </Window>
  );
}
